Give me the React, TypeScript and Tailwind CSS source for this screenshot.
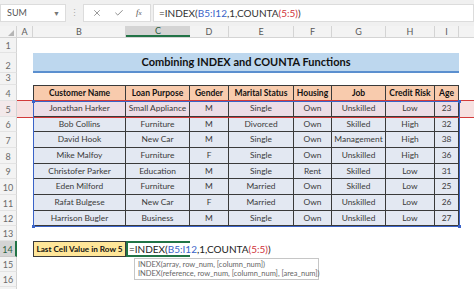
import { Check, X } from "lucide-react";

const cols =
  "grid grid-cols-[17px_16px_93px_64px_39px_65px_38px_54px_49px_24px_1fr]";

const data = [
  ["Jonathan Harker", "Small Appliance", "M", "Single", "Own", "Unskilled", "Low", "23"],
  ["Bob Collins", "Furniture", "M", "Divorced", "Own", "Skilled", "High", "32"],
  ["David Hook", "New Car", "M", "Single", "Own", "Management", "High", "38"],
  ["Mike Malfoy", "Furniture", "F", "Single", "Own", "Unskilled", "High", "36"],
  ["Christofer Parker", "Education", "M", "Single", "Rent", "Skilled", "Low", "31"],
  ["Eden Milford", "Furniture", "M", "Married", "Own", "Skilled", "Low", "25"],
  ["Rafat Bulgese", "New Car", "F", "Married", "Own", "Unskilled", "Low", "26"],
  ["Harrison Bugler", "Business", "M", "Single", "Own", "Unskilled", "Low", "27"],
];

const headers = ["Customer Name", "Loan Purpose", "Gender", "Marital Status", "Housing", "Job", "Credit Risk", "Age"];

// row heights for rows 5..12
const dataHeights = ["h-[16px]", "h-[15px]", "h-[16px]", "h-[16px]", "h-[15px]", "h-[16px]", "h-[16px]", "h-[15px]"];

function RowHead({ n, active, pink }: { n: number; active?: boolean; pink?: boolean }) {
  if (active)
    return (
      <div className="flex items-end justify-center pb-[2px] bg-[#d4d4d4] border-r-2 border-r-[#217346] border-b border-b-[#c8c8c8] text-[9px] leading-none text-[#2c5e3f]">
        {n}
      </div>
    );
  return (
    <div
      className={`flex items-end justify-center pb-[2px] border-r border-r-[#d4d4d4] border-b border-b-[#e3e3e3] text-[9px] leading-none text-[#6a6a6a] ${pink ? "bg-[#f3e9ea]" : "bg-[#f3f3f3]"}`}
    >
      {n}
    </div>
  );
}

function Formula() {
  return (
    <>
      <span>=INDEX(</span>
      <span className="text-[#3a63c8]">B5:I12</span>
      <span>,1,COUNTA</span>
      <span className="text-[#d0323a]">(5:5)</span>
      <span>)</span>
    </>
  );
}

export default function App() {
  return (
    <div className="relative w-[474px] h-[289px] overflow-hidden bg-white font-['Lato',sans-serif] text-[#3a3a3a]">
      {/* formula bar */}
      <div className="flex h-[26px] bg-[#f0f0f0] pt-[4px] pb-[4px]">
        <div className="flex w-[66px] items-center justify-between bg-white border border-[#dcdcdc] pl-[6px] pr-[5px]">
          <span className="text-[9px] text-[#555]">SUM</span>
          <span className="text-[7px] text-[#777]">▼</span>
        </div>
        <div className="flex w-[17px] items-center justify-center text-[9px] text-[#aaa]">⋮</div>
        <div className="flex w-[68px] items-center gap-[12px] bg-white border border-[#dcdcdc] pl-[8px]">
          <X size={10} strokeWidth={1.6} className="text-[#666]" />
          <Check size={10} strokeWidth={1.8} className="text-[#666]" />
          <span className="font-['Liberation_Serif',serif] italic text-[9px] text-[#555]">
            f<span className="text-[7px]">x</span>
          </span>
        </div>
        <div className="ml-[2px] flex flex-1 items-center bg-white border border-[#dcdcdc] pl-[5px] text-[10px] text-[#333] whitespace-nowrap">
          <Formula />
        </div>
      </div>

      {/* column headers */}
      <div className={`${cols} h-[12px] bg-[#f3f3f3] border-b border-[#d4d4d4] text-[9px] leading-none text-[#5a5a5a]`}>
        <div className="flex items-end justify-end pr-[2px] pb-[1px] border-r border-[#d4d4d4]">
          <svg width="6" height="6" viewBox="0 0 6 6">
            <path d="M6 0 L6 6 L0 6 Z" fill="#b5b5b5" />
          </svg>
        </div>
        {["A", "B"].map((c) => (
          <div key={c} className="flex items-center justify-center border-r border-[#d4d4d4]">{c}</div>
        ))}
        <div className="flex items-center justify-center bg-[#d4d4d4] border-b-2 border-[#217346] text-[#2c5e3f]">C</div>
        {["D", "E", "F", "G", "H", "I"].map((c) => (
          <div key={c} className="flex items-center justify-center border-r border-[#d4d4d4]">{c}</div>
        ))}
        <div />
      </div>

      {/* rows 1-3 */}
      <div className={`${cols} h-[15px]`}>
        <RowHead n={1} />
      </div>
      <div className={`${cols} h-[20px]`}>
        <RowHead n={2} />
        <div />
        <div className="col-span-8 flex items-center justify-center bg-[#bdd7ee] border-b-2 border-[#5b8fcf] text-[11px] font-bold text-[#111]">
          Combining INDEX and COUNTA Functions
        </div>
      </div>
      <div className={`${cols} h-[12px]`}>
        <RowHead n={3} />
      </div>

      {/* table header row 4 */}
      <div className={`${cols} h-[16px]`}>
        <RowHead n={4} />
        <div />
        {headers.map((h, i) => (
          <div
            key={h}
            className={`flex items-center justify-center bg-[#f8cbad] border-t border-r border-b border-[#3a3a3a] text-[8.5px] font-bold text-[#111] whitespace-nowrap ${i === 0 ? "border-l" : ""}`}
          >
            {h}
          </div>
        ))}
      </div>

      {/* data rows 5-12 */}
      {data.map((r, ri) => {
        const pink = ri === 0;
        return (
          <div key={ri} className={`${cols} ${dataHeights[ri]}`}>
            <RowHead n={ri + 5} pink={pink} />
            <div className={pink ? "bg-[#f7e0e0]" : ""} />
            {r.map((v, ci) => (
              <div
                key={ci}
                className={`flex items-center justify-center border-r border-b border-[#3a3a3a] text-[8.4px] whitespace-nowrap ${pink ? "bg-[#ecdde6]" : "bg-[#e3e8f2]"} ${ci === 0 ? "border-l" : ""}`}
              >
                {v}
              </div>
            ))}
            <div className={pink ? "bg-[#f7e0e0]" : ""} />
          </div>
        );
      })}

      {/* rows 13-16 */}
      <div className={`${cols} h-[15px]`}>
        <RowHead n={13} />
      </div>
      <div className={`${cols} h-[16px]`}>
        <RowHead n={14} active />
        <div />
        <div className="flex items-center justify-center bg-[#ffe699] border border-[#3a3a3a] text-[8.2px] font-bold text-[#111] whitespace-nowrap">
          Last Cell Value in Row 5
        </div>
        <div className="relative border-2 border-[#217346]">
          <div className="absolute left-[1px] top-0 bottom-0 z-10 flex items-center bg-white pr-[1px] whitespace-nowrap text-[10px] text-[#222]">
            <Formula />
          </div>
        </div>
      </div>
      <div className={`${cols} h-[15px]`}>
        <RowHead n={15} />
      </div>
      <div className={`${cols} h-[15px]`}>
        <RowHead n={16} />
      </div>
      <div className={`${cols} h-[4px]`}>
        <div className="bg-[#f3f3f3] border-r border-[#d4d4d4]" />
      </div>

      {/* row 5:5 reference highlight */}
      <div className="pointer-events-none absolute left-[17px] right-0 top-[100px] h-[18px] border-y border-[#d23a3a]" />

      {/* B5:I12 reference highlight */}
      <div className="pointer-events-none absolute left-[33px] top-[101px] w-[427px] h-[126px] border border-[#3a63c8]">
        <span className="absolute -left-[2px] -top-[2px] h-[3px] w-[3px] bg-[#3a63c8]" />
        <span className="absolute -right-[2px] -top-[2px] h-[3px] w-[3px] bg-[#3a63c8]" />
        <span className="absolute -left-[2px] -bottom-[2px] h-[3px] w-[3px] bg-[#3a63c8]" />
        <span className="absolute -right-[2px] -bottom-[2px] h-[3px] w-[3px] bg-[#3a63c8]" />
      </div>

      {/* function tooltip */}
      <div className="absolute left-[134px] top-[258px] w-[185px] border border-[#c6c6c6] bg-white px-[3px] py-[1px] text-[7.5px] leading-[9px] text-[#666] whitespace-nowrap">
        <div>INDEX(array, row_num, [column_num])</div>
        <div>INDEX(reference, row_num, [column_num], [area_num])</div>
      </div>
    </div>
  );
}
